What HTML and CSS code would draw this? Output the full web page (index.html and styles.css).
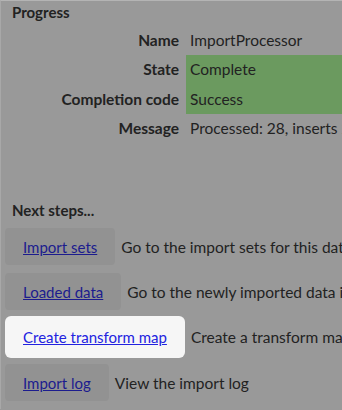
FILE: index.html
```html
<!DOCTYPE html>
<html lang="en">
<head>
    <meta charset="UTF-8">
    <title>Import progress</title>
    <link rel="stylesheet" href="styles.css">
</head>
<body>
    <div class="panel">
        <h2 class="section-title">Progress</h2>
        <table class="progress-table">
            <tr>
                <th>Name</th>
                <td>ImportProcessor</td>
            </tr>
            <tr class="ok">
                <th>State</th>
                <td>Complete</td>
            </tr>
            <tr class="ok">
                <th>Completion code</th>
                <td>Success</td>
            </tr>
            <tr>
                <th>Message</th>
                <td>Processed: 28, inserts 28, updates 0, errors 0</td>
            </tr>
        </table>

        <h2 class="section-title next">Next steps...</h2>
        <div class="steps">
            <div class="step">
                <span class="step-btn"><a href="#">Import sets</a></span>
                <span class="step-desc">Go to the import sets for this data load</span>
            </div>
            <div class="step">
                <span class="step-btn"><a href="#">Loaded data</a></span>
                <span class="step-desc">Go to the newly imported data inserted into the import set table</span>
            </div>
            <div class="step">
                <span class="step-btn active"><a href="#">Create transform map</a></span>
                <span class="step-desc">Create a transform map for this data</span>
            </div>
            <div class="step">
                <span class="step-btn"><a href="#">Import log</a></span>
                <span class="step-desc">View the import log</span>
            </div>
        </div>
    </div>
</body>
</html>
```

FILE: styles.css
```css
html, body {
    margin: 0;
    padding: 0;
}
body {
    font-family: Lato, "Open Sans", sans-serif;
    font-size: 15px;
    background: #999;
    color: #222;
    width: 342px;
    height: 410px;
    overflow: hidden;
}
.panel {
    border-top: 1px solid #b4b4b4;
    border-left: 1px solid #a8a8a8;
    height: 409px;
    box-sizing: border-box;
    padding: 0 0 0 4px;
}
.section-title {
    font-size: 15px;
    font-weight: bold;
    margin: 0;
    padding: 1px 0 0 7px;
    line-height: 20px;
    color: #222;
}
.section-title.next {
    padding-top: 0;
    margin-top: 57px;
}
.progress-table {
    border-collapse: collapse;
    table-layout: fixed;
    width: 420px;
    white-space: nowrap;
    margin-top: 3px;
}
.progress-table th {
    width: 174px;
    text-align: right;
    font-weight: bold;
    padding: 0 7px 0 0;
    height: 29.5px;
    font-size: 15.5px;
}
.progress-table td {
    padding: 0 4px;
    font-size: 15.5px;
    overflow: hidden;
}
.progress-table tr.ok td {
    background: #6b9a5f;
}
.steps {
    display: flex;
    flex-direction: column;
    gap: 8px;
    margin-top: 8px;
}
.step {
    display: flex;
    align-items: center;
    gap: 6px;
    white-space: nowrap;
}
.step-btn {
    display: flex;
    align-items: center;
    height: 37px;
    padding: 0 18px;
    background: #929292;
    border-radius: 4px;
    font-size: 15px;
}
.step-btn a {
    color: #1c1c8e;
}
.step-btn.active {
    background: #f6f6f6;
    border-radius: 6px;
    margin: -2px 0;
    padding: 2px 18px;
    height: 38px;
}
.step-btn.active a {
    color: #2222e0;
}
.step-desc {
    font-size: 15.5px;
}
```
